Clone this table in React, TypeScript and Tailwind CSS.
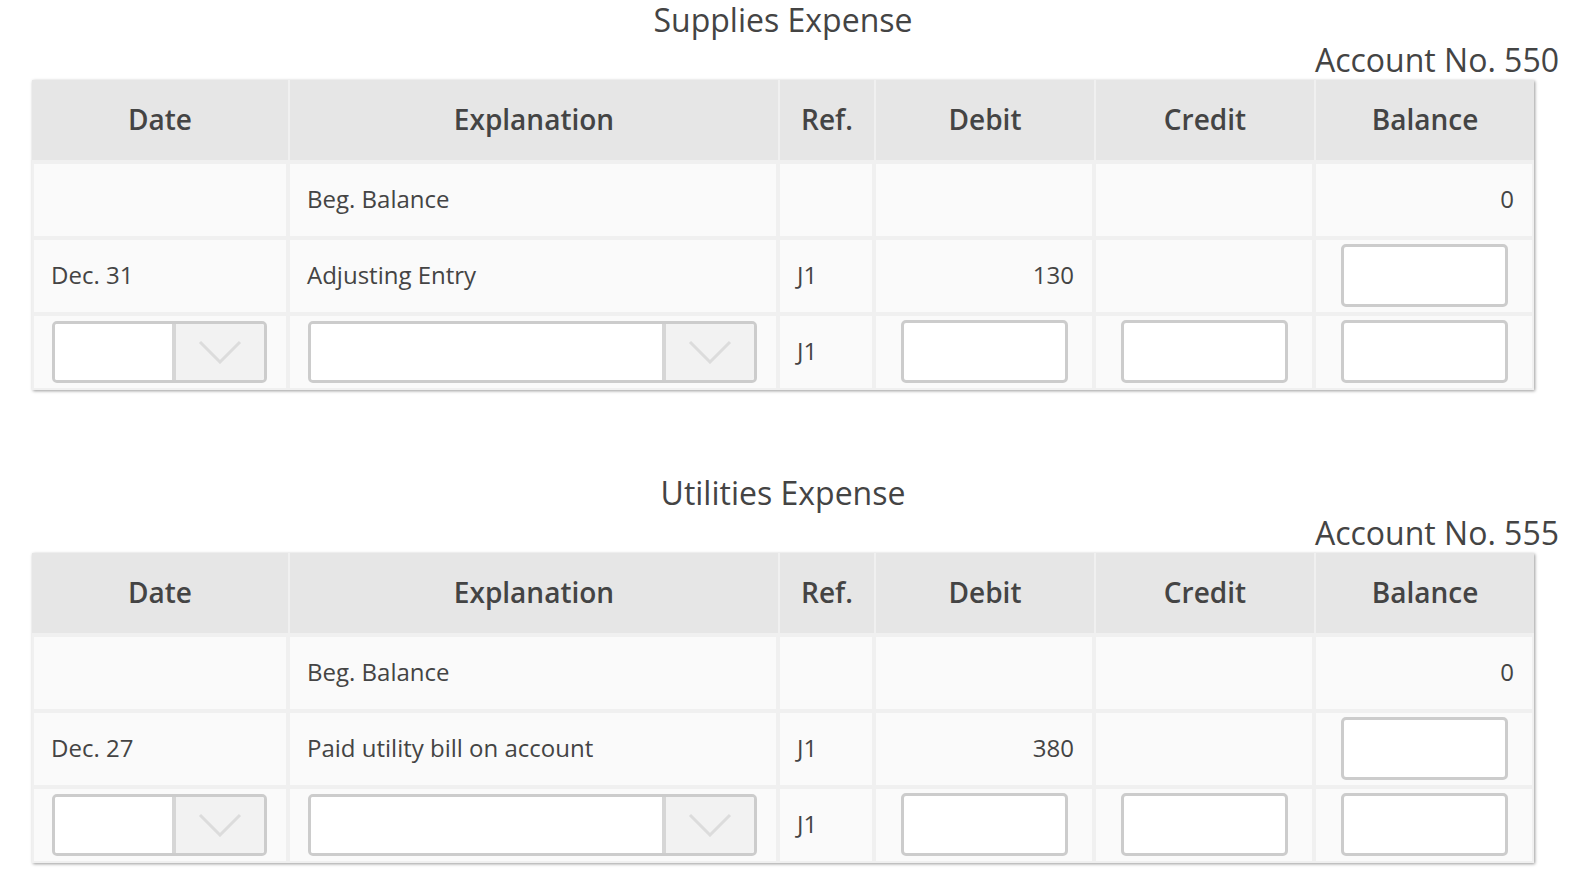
const cols = "grid grid-cols-[256px_490px_96px_220px_220px_220px]";

function Chevron() {
  return (
    <svg width="44" height="24" viewBox="0 0 44 24" fill="none">
      <polyline points="2,2 22,22 42,2" stroke="#dcdcdc" strokeWidth="3" />
    </svg>
  );
}

function Dropdown() {
  return (
    <div className="flex h-[62px] w-full overflow-hidden rounded-[5px] border-[3px] border-[#cccccc] bg-white">
      <div className="flex-1 bg-white" />
      <div className="flex w-[92px] items-center justify-center border-l-[4px] border-[#d6d6d6] bg-[#f2f2f2]">
        <Chevron />
      </div>
    </div>
  );
}

function Input() {
  return <div className="h-[63px] w-[167px] rounded-[5px] border-[3px] border-[#cccccc] bg-white" />;
}

function Cell({ children, align = "left" }: { children?: React.ReactNode; align?: "left" | "right" | "center" }) {
  const a = align === "right" ? "justify-end pr-[18px]" : align === "center" ? "justify-center" : "justify-start pl-[17px]";
  return (
    <div className={`flex h-[76px] items-center border-2 border-[#f0f0f0] bg-[#fafafa] pb-[2px] text-[24px] text-[#444] ${a}`}>
      {children}
    </div>
  );
}

type Row = { date: string; explanation: string; ref: string; debit: string; balance: string };

function Ledger({ title, account, rows }: { title: string; account: string; rows: Row[] }) {
  const headers = ["Date", "Explanation", "Ref.", "Debit", "Credit", "Balance"];
  return (
    <section className="w-[1527px]">
      <h2 className="w-[1502px] text-center text-[32px] leading-[40px] text-[#444]">{title}</h2>
      <p className="text-right text-[32px] leading-[39px] text-[#444]">Account No. {account}</p>
      <div className="mt-px w-[1502px] shadow-[1px_1px_3px_rgba(0,0,0,0.4)]">
        <div className={cols}>
          {headers.map((h, i) => (
            <div
              key={h}
              className={`flex h-[82px] items-center justify-center border-b-2 border-[#f0f0f0] bg-[#e6e6e6] pb-[3px] text-[28px] font-semibold text-[#444] ${i > 0 ? "border-l-2" : ""}`}
            >
              {h}
            </div>
          ))}
        </div>
        {rows.map((r) => (
          <div key={r.explanation} className={cols}>
            <Cell>{r.date}</Cell>
            <Cell>{r.explanation}</Cell>
            <Cell>{r.ref}</Cell>
            <Cell align="right">{r.debit}</Cell>
            <Cell />
            {r.balance ? <Cell align="right">{r.balance}</Cell> : <Cell align="center"><Input /></Cell>}
          </div>
        ))}
        <div className={cols}>
          <div className="flex h-[76px] items-center border-2 border-[#f0f0f0] bg-[#fafafa] pl-[18px] pr-[19px]">
            <Dropdown />
          </div>
          <div className="flex h-[76px] items-center border-2 border-[#f0f0f0] bg-[#fafafa] pl-[18px] pr-[19px]">
            <Dropdown />
          </div>
          <Cell>J1</Cell>
          <Cell align="center"><Input /></Cell>
          <Cell align="center"><Input /></Cell>
          <Cell align="center"><Input /></Cell>
        </div>
      </div>
    </section>
  );
}

export default function App() {
  return (
    <div className="min-h-screen bg-white pl-[32px] font-['Open_Sans',sans-serif]">
      <Ledger
        title="Supplies Expense"
        account="550"
        rows={[
          { date: "", explanation: "Beg. Balance", ref: "", debit: "", balance: "0" },
          { date: "Dec. 31", explanation: "Adjusting Entry", ref: "J1", debit: "130", balance: "" },
        ]}
      />
      <div className="mt-[83px]">
        <Ledger
          title="Utilities Expense"
          account="555"
          rows={[
            { date: "", explanation: "Beg. Balance", ref: "", debit: "", balance: "0" },
            { date: "Dec. 27", explanation: "Paid utility bill on account", ref: "J1", debit: "380", balance: "" },
          ]}
        />
      </div>
    </div>
  );
}
